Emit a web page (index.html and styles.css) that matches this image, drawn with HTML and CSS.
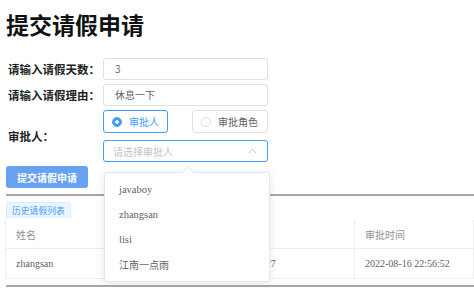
FILE: index.html
```html
<!DOCTYPE html>
<html lang="zh">
<head>
    <meta charset="UTF-8">
    <title>提交请假申请</title>
    <link rel="stylesheet" href="styles.css">
</head>
<body>
    <h1 class="title">提交请假申请</h1>

    <div class="form">
        <div class="row">
            <label class="label">请输入请假天数：</label>
            <div class="input">3</div>
        </div>
        <div class="row">
            <label class="label">请输入请假理由：</label>
            <div class="input">休息一下</div>
        </div>
        <div class="row">
            <label class="label">审批人：</label>
            <div class="approver">
                <div class="radio-group">
                    <div class="radio checked"><span class="dot"></span>审批人</div>
                    <div class="radio"><span class="dot"></span>审批角色</div>
                </div>
                <div class="select">
                    <span class="placeholder">请选择审批人</span>
                    <svg class="chevron" width="9" height="6" viewBox="0 0 9 6">
                        <path d="M1 5 L4.5 1.5 L8 5" fill="none" stroke="#c0c4cc" stroke-width="1"/>
                    </svg>
                    <div class="dropdown">
                        <span class="arrow"></span>
                        <div class="option latin">javaboy</div>
                        <div class="option latin">zhangsan</div>
                        <div class="option latin">lisi</div>
                        <div class="option">江南一点雨</div>
                    </div>
                </div>
            </div>
        </div>
        <button class="submit">提交请假申请</button>
    </div>

    <hr class="divider">

    <span class="tag">历史请假列表</span>
    <table class="history">
        <tr>
            <th class="col-name">姓名</th>
            <th class="col-time">申请时间</th>
            <th>审批时间</th>
        </tr>
        <tr>
            <td>zhangsan</td>
            <td>2022-08-16 22:50:27</td>
            <td>2022-08-16 22:56:52</td>
        </tr>
    </table>
    <hr class="divider bottom">
</body>
</html>
```

FILE: styles.css
```css
body {
    margin: 0;
    padding: 0 0 0 6px;
    font-family: "Noto Sans CJK SC", sans-serif;
    color: #303133;
    background-color: white;
    overflow: hidden;
}
.title {
    margin: 8px 0 0;
    font-size: 23px;
    line-height: 32px;
    font-weight: bold;
    color: #111;
}
.form {
    margin-top: 18px;
}
.row {
    display: flex;
    align-items: center;
    margin-bottom: 4px;
}
.label {
    flex: 0 0 95px;
    padding-left: 2px;
    font-size: 11.5px;
    font-weight: bold;
    color: #222;
    white-space: nowrap;
}
.input {
    box-sizing: border-box;
    width: 165px;
    height: 22px;
    line-height: 20px;
    padding: 0 0 0 11px;
    border: 1px solid #dcdfe6;
    border-radius: 3px;
    font-size: 10px;
    color: #606266;
}
.approver {
    width: 165px;
}
.radio-group {
    display: flex;
    justify-content: space-between;
}
.radio {
    box-sizing: border-box;
    display: flex;
    align-items: center;
    height: 23px;
    padding: 0 0 0 8px;
    border: 1px solid #dcdfe6;
    border-radius: 3px;
    font-size: 10px;
    color: #606266;
    white-space: nowrap;
}
.radio:first-child {
    width: 65px;
}
.radio:last-child {
    width: 76px;
}
.radio .dot {
    flex: 0 0 auto;
    width: 8px;
    height: 8px;
    margin-right: 7px;
    border: 1px solid #dcdfe6;
    border-radius: 50%;
}
.radio.checked {
    border-color: #409eff;
    color: #409eff;
}
.radio.checked .dot {
    border-color: #409eff;
    background: radial-gradient(circle, white 0 1.5px, #409eff 2px);
}
.select {
    position: relative;
    box-sizing: border-box;
    display: flex;
    align-items: center;
    justify-content: space-between;
    height: 22px;
    margin-top: 7px;
    padding: 0 10px 0 9px;
    border: 1px solid #409eff;
    border-radius: 3px;
    font-size: 10px;
}
.placeholder {
    color: #c0c4cc;
}
.dropdown {
    position: absolute;
    left: 0;
    top: 31px;
    width: 164px;
    padding: 4px 0;
    background-color: white;
    border: 1px solid #e4e7ed;
    border-radius: 3px;
    box-shadow: 0 2px 9px rgba(0, 0, 0, 0.1);
    z-index: 5;
}
.dropdown .arrow {
    position: absolute;
    left: 78px;
    top: -5px;
    width: 8px;
    height: 8px;
    background-color: white;
    border-left: 1px solid #e4e7ed;
    border-top: 1px solid #e4e7ed;
    transform: rotate(45deg);
}
.option {
    height: 25px;
    line-height: 25px;
    padding-left: 14px;
    font-size: 10px;
    color: #606266;
}
.option.latin {
    font-family: "Liberation Serif", serif;
    font-size: 10.5px;
}
.submit {
    display: block;
    width: 82px;
    height: 22px;
    margin-top: 3px;
    padding: 0;
    background-color: #66a1f2;
    color: white;
    border: none;
    border-radius: 3px;
    font-family: "Noto Sans CJK SC", sans-serif;
    font-size: 10px;
    font-weight: bold;
}
.divider {
    margin: 6px 0 0 0;
    border: none;
    border-top: 2px solid #a8a8a8;
}
.divider.bottom {
    margin-top: 6px;
}
.tag {
    display: inline-block;
    margin-top: 6px;
    height: 15px;
    line-height: 15px;
    padding: 0 5px;
    background-color: #ecf5ff;
    border: 1px solid #d9ecff;
    border-bottom: none;
    border-radius: 3px 3px 0 0;
    font-size: 8.8px;
    color: #409eff;
    vertical-align: top;
}
.history {
    width: calc(100% + 1px);
    margin-left: -1px;
    border-collapse: collapse;
    font-size: 10px;
    color: #606266;
}
.history th, .history td {
    text-align: left;
    padding: 0 10px;
    border: 1px solid #ebeef5;
    font-weight: normal;
}
.history th {
    height: 28px;
    color: #909399;
}
.history td {
    height: 29px;
    font-family: "Liberation Serif", serif;
}
.history tr:first-child th {
    border-top: none;
}
.col-name {
    width: 154px;
}
.col-time {
    width: 153px;
}
```
